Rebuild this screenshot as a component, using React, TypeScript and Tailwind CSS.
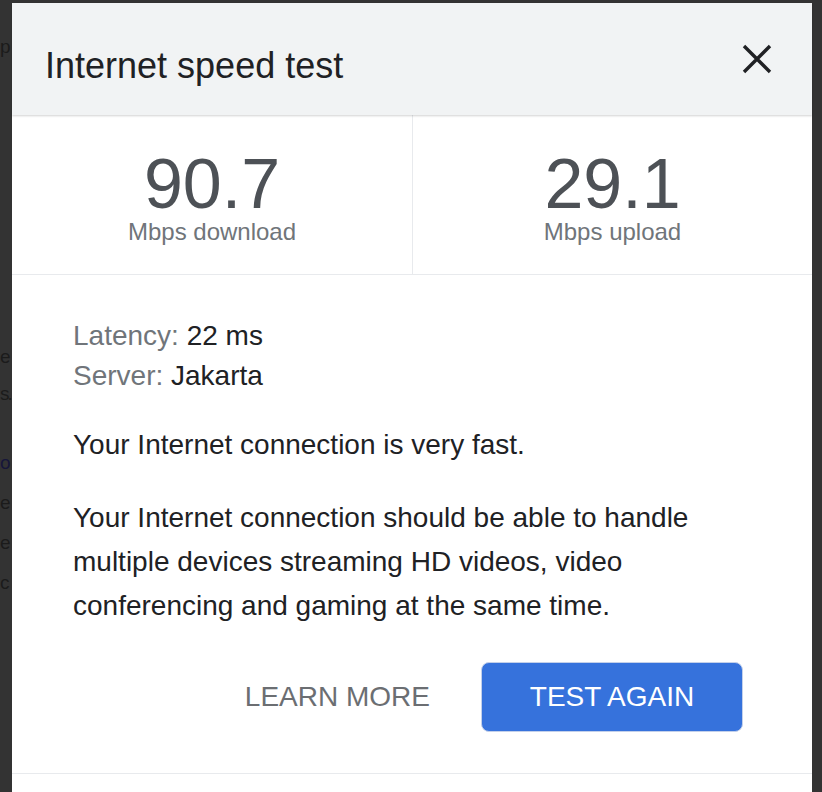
const BackdropStrip = () => {
  return (
    <div className="w-[12px] shrink-0 overflow-hidden flex flex-col text-[19px] text-[#1b1b1b]">
      <div className="mt-[29px] h-[36px] leading-[36px]">p</div>
      <div className="mt-[274px] h-[36px] leading-[36px]">e</div>
      <div className="mt-[1px] h-[36px] leading-[36px] tracking-[-2px]">s.</div>
      <div className="mt-[33px] h-[36px] leading-[36px] text-[#16163a]">o</div>
      <div className="mt-[4px] h-[36px] leading-[36px]">e</div>
      <div className="mt-[4px] h-[36px] leading-[36px]">e</div>
      <div className="mt-[4px] h-[36px] leading-[36px]">c</div>
    </div>
  );
};

type StatProps = {
  value: string;
  label: string;
  divider?: boolean;
};
const Stat = ({ value, label, divider }: StatProps) => {
  return (
    <div
      className={
        divider
          ? "flex flex-col items-center pt-[34px] pb-[30px] border-l border-[#e8eaed]"
          : "flex flex-col items-center pt-[34px] pb-[30px]"
      }
    >
      <div className="text-[70px] leading-none text-[#4d5156]">{value}</div>
      <div className="mt-[1px] text-[24px] leading-none text-[#70757a]">{label}</div>
    </div>
  );
};

export default function App() {
  return (
    <div className="w-[822px] h-[792px] bg-[#333333] flex overflow-hidden font-['Liberation_Sans',Arial,sans-serif]">
      <BackdropStrip />
      <div className="w-[800px] shrink-0 mt-[3px] bg-white flex flex-col">
        {/* header */}
        <div className="h-[112px] bg-[#f1f3f4] flex items-start shadow-[0_1px_2px_rgba(0,0,0,0.18)] relative z-10">
          <div className="pl-[33px] pt-[45px] text-[36px] leading-none text-[#202124]">
            Internet speed test
          </div>
          <button className="ml-auto mr-[40px] mt-[41px] w-[30px] h-[30px] flex items-center justify-center">
            <svg width="30" height="30" viewBox="0 0 30 30">
              <path
                d="M2 2 L28 28 M28 2 L2 28"
                stroke="#202124"
                strokeWidth="3.4"
                fill="none"
              />
            </svg>
          </button>
        </div>

        {/* results */}
        <div className="grid grid-cols-2 border-b border-[#e8eaed]">
          <Stat value="90.7" label="Mbps download" />
          <Stat value="29.1" label="Mbps upload" divider />
        </div>

        {/* details */}
        <div className="pl-[61px] pt-[41px] text-[28px] text-[#202124]">
          <div className="leading-[40px]">
            <span className="text-[#70757a]">Latency:</span> 22 ms
          </div>
          <div className="leading-[40px]">
            <span className="text-[#70757a]">Server:</span> Jakarta
          </div>
          <div className="mt-[27px] leading-[44px]">
            Your Internet connection is very fast.
          </div>
          <div className="mt-[29px] leading-[44px]">
            Your Internet connection should be able to handle
            <br />
            multiple devices streaming HD videos, video
            <br />
            conferencing and gaming at the same time.
          </div>
        </div>

        <div className="flex justify-end items-center gap-[35px] pr-[69px] mt-[34px] pb-[41px] border-b border-[#e8eaed]">
          <button className="h-[70px] px-[16px] text-[28px] text-[#6b6e72]">
            LEARN MORE
          </button>
          <button className="w-[262px] h-[70px] rounded-[8px] bg-[#3672dc] border border-[#c3d0ea] text-[28px] text-white">
            TEST AGAIN
          </button>
        </div>
        <div className="flex-1" />
      </div>
      <div className="flex-1" />
    </div>
  );
}
